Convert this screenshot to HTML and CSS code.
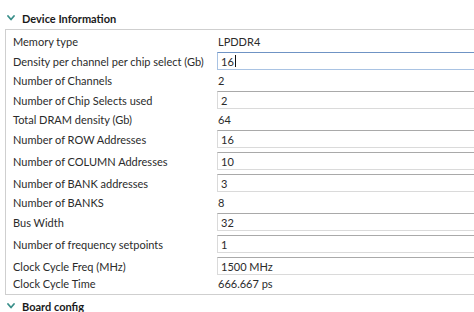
FILE: index.html
```html
<!DOCTYPE html>
<html lang="en">
<head>
    <meta charset="UTF-8">
    <meta name="viewport" content="width=device-width, initial-scale=1.0">
    <title>Device Information</title>
    <link rel="stylesheet" href="styles.css">
</head>
<body>
    <div class="page">
        <div class="section-title">
            <svg class="chevron" width="8" height="6" viewBox="0 0 8 6"><polyline points="1,1 4,4.5 7,1" /></svg>
            <span>Device Information</span>
        </div>

        <div class="panel">
            <div class="row text"><span class="label">Memory type</span><span class="value">LPDDR4</span></div>
            <div class="row"><span class="label">Density per channel per chip select (Gb)</span><span class="field focused">16<span class="caret"></span></span></div>
            <div class="row text"><span class="label">Number of Channels</span><span class="value">2</span></div>
            <div class="row"><span class="label">Number of Chip Selects used</span><span class="field">2</span></div>
            <div class="row text"><span class="label">Total DRAM density (Gb)</span><span class="value">64</span></div>
            <div class="row"><span class="label">Number of ROW Addresses</span><span class="field">16</span></div>
            <div class="row"><span class="label">Number of COLUMN Addresses</span><span class="field">10</span></div>
            <div class="row"><span class="label">Number of BANK addresses</span><span class="field">3</span></div>
            <div class="row text"><span class="label">Number of BANKS</span><span class="value">8</span></div>
            <div class="row"><span class="label">Bus Width</span><span class="field">32</span></div>
            <div class="row"><span class="label">Number of frequency setpoints</span><span class="field">1</span></div>
            <div class="row"><span class="label">Clock Cycle Freq (MHz)</span><span class="field">1500 MHz</span></div>
            <div class="row text last"><span class="label">Clock Cycle Time</span><span class="value">666.667 ps</span></div>
        </div>

        <div class="section-title board">
            <svg class="chevron" width="8" height="6" viewBox="0 0 8 6"><polyline points="1,1 4,4.5 7,1" /></svg>
            <span>Board config</span>
        </div>
    </div>
</body>
</html>
```

FILE: styles.css
```css
html, body {
    margin: 0;
    padding: 0;
    overflow: hidden;
    background: #fff;
}
body {
    font-family: Lato, "Liberation Sans", Arial, sans-serif;
    font-size: 11px;
    color: #2b2b2b;
}
.section-title {
    display: flex;
    align-items: center;
    gap: 7px;
    height: 14px;
    padding: 11px 0 0 7px;
    margin-bottom: 4px;
    font-weight: bold;
    color: #1a1a1a;
}
.section-title.board {
    padding-top: 4px;
    margin-bottom: 0;
}
.chevron {
    fill: none;
    stroke: #3a8f8a;
    stroke-width: 1.8;
    stroke-linecap: round;
    stroke-linejoin: round;
}
.panel {
    margin-left: 5px;
    border: 1px solid #cfcfcf;
    border-right: none;
    padding: 3px 0 0 7px;
}
.row {
    display: grid;
    grid-template-columns: 204px 1fr;
    align-items: center;
    height: 22px;
}
.row.text {
    height: 17px;
}
.row.last {
    align-items: start;
}
.value {
    padding-left: 1px;
}
.field {
    display: flex;
    align-items: center;
    box-sizing: border-box;
    height: 18px;
    padding-left: 3px;
    border: 1px solid #dadada;
    border-top-color: #a9a9a9;
    border-right: none;
    background: #fff;
}
.field.focused {
    border-color: #a9c3e3;
    border-top-color: #6f93c4;
    border-right: none;
}
.caret {
    display: inline-block;
    width: 1px;
    height: 12px;
    margin-left: 1px;
    background: #111;
}
```
